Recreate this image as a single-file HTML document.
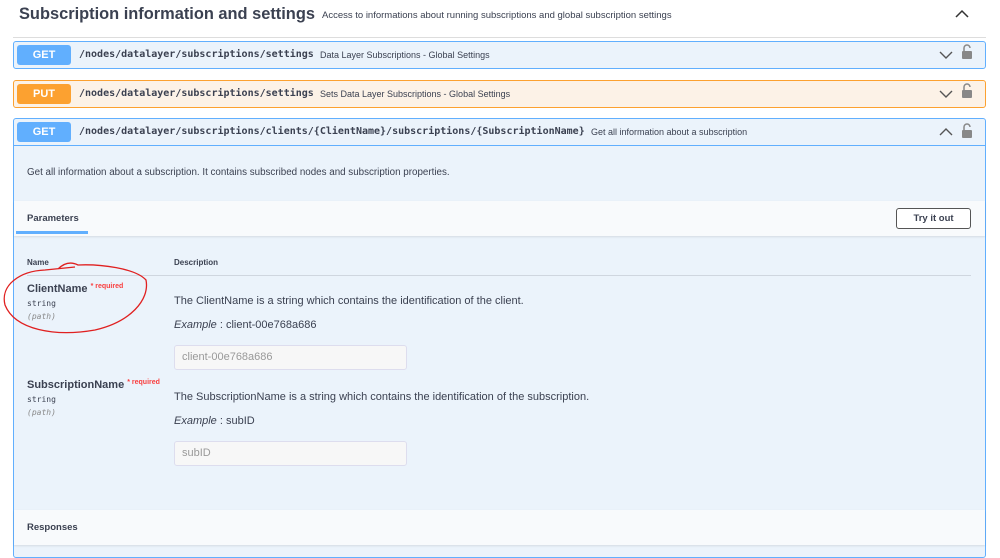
<!DOCTYPE html><html><head><style>
*{margin:0;padding:0;box-sizing:border-box}
body{width:1000px;height:549px;overflow:hidden;background:#fff;font-family:"Liberation Sans",sans-serif;color:#3b4151;position:relative}
.a{position:absolute;white-space:nowrap}
.mono{font-family:"DejaVu Sans Mono","Liberation Mono",monospace}
.badge{position:absolute;left:3px;top:3px;width:54px;height:20px;border-radius:3px;color:#fff;font-weight:bold;font-size:11px;text-align:center;line-height:20px}
.path{font-weight:bold;font-size:10px}
.sm{font-size:9px;color:#3b4151}
</style></head><body>
<div class="a" style="left:19px;top:5px;font-size:16.4px;font-weight:bold">Subscription information and settings</div>
<div class="a" style="left:322px;top:10px;font-size:9.5px">Access to informations about running subscriptions and global subscription settings</div>
<svg class="a" style="left:955px;top:9px" width="14" height="10"><path d="M1 8L7 2L13 8" stroke="#333" stroke-width="1.5" fill="none"/></svg>
<div class="a" style="left:13px;top:37px;width:973px;height:1px;background:#ddd"></div>

<div class="a" style="left:13px;top:41px;width:973px;height:28px;background:#ebf3fb;border:1px solid #61affe;border-radius:3px">
<div class="badge" style="background:#61affe">GET</div>
<div class="a mono path" style="left:65px;top:7px">/nodes/datalayer/subscriptions/settings</div>
<div class="a sm" style="left:306px;top:8px">Data Layer Subscriptions - Global Settings</div>
</div>
<div class="a" style="left:13px;top:80px;width:973px;height:28px;background:#fcf2e7;border:1px solid #fca130;border-radius:3px">
<div class="badge" style="background:#fca130">PUT</div>
<div class="a mono path" style="left:65px;top:7px">/nodes/datalayer/subscriptions/settings</div>
<div class="a sm" style="left:306px;top:8px">Sets Data Layer Subscriptions - Global Settings</div>
</div>
<div class="a" style="left:13px;top:118px;width:973px;height:440px;background:#ebf3fb;border:1px solid #61affe;border-radius:3px">
<div class="badge" style="background:#61affe">GET</div>
<div class="a mono path" style="left:65px;top:7px">/nodes/datalayer/subscriptions/clients/{ClientName}/subscriptions/{SubscriptionName}</div>
<div class="a sm" style="left:577px;top:8px">Get all information about a subscription</div>
<div class="a" style="left:0;top:26px;width:971px;height:1px;background:#61affe"></div>
<div class="a" style="left:13px;top:48px;font-size:9.8px">Get all information about a subscription. It contains subscribed nodes and subscription properties.</div>
<div class="a" style="left:0;top:82px;width:971px;height:35px;background:#f8fafc;box-shadow:0 1px 2px rgba(0,0,0,.1)"></div>
<div class="a" style="left:13px;top:94px;font-size:9.5px;font-weight:bold">Parameters</div>
<div class="a" style="left:2px;top:112px;width:72px;height:3px;background:#61affe"></div>
<div class="a" style="left:882px;top:89px;width:75px;height:21px;border:1px solid #555;border-radius:3px;background:#fff;font-size:9.5px;font-weight:bold;text-align:center;line-height:19px">Try it out</div>
<div class="a" style="left:13px;top:139px;font-size:8px;font-weight:bold">Name</div>
<div class="a" style="left:160px;top:139px;font-size:8px;font-weight:bold">Description</div>
<div class="a" style="left:13px;top:156px;width:944px;height:1px;background:#cfd6df"></div>
<div class="a" style="left:13px;top:164px;font-size:11px;font-weight:bold">ClientName <span style="color:#f93e3e;font-size:7px;vertical-align:top">* required</span></div>
<div class="a mono" style="left:13px;top:180px;font-size:8px">string</div>
<div class="a mono" style="left:13px;top:193px;font-size:8px;color:#888;font-style:italic">(path)</div>
<div class="a" style="left:160px;top:176px;font-size:11px">The ClientName is a string which contains the identification of the client.</div>
<div class="a" style="left:160px;top:200px;font-size:11px"><i>Example</i> : client-00e768a686</div>
<div class="a" style="left:160px;top:226px;width:233px;height:25px;background:#f7f7f7;border:1px solid #dde;border-radius:3px;font-size:11px;color:#999;padding:5px 7px">client-00e768a686</div>
<div class="a" style="left:13px;top:260px;font-size:11px;font-weight:bold">SubscriptionName <span style="color:#f93e3e;font-size:7px;vertical-align:top">* required</span></div>
<div class="a mono" style="left:13px;top:276px;font-size:8px">string</div>
<div class="a mono" style="left:13px;top:289px;font-size:8px;color:#888;font-style:italic">(path)</div>
<div class="a" style="left:160px;top:272px;font-size:11px">The SubscriptionName is a string which contains the identification of the subscription.</div>
<div class="a" style="left:160px;top:296px;font-size:11px"><i>Example</i> : subID</div>
<div class="a" style="left:160px;top:322px;width:233px;height:25px;background:#f7f7f7;border:1px solid #dde;border-radius:3px;font-size:11px;color:#999;padding:5px 7px">subID</div>
<div class="a" style="left:0;top:391px;width:971px;height:35px;background:#f8fafc;box-shadow:0 1px 2px rgba(0,0,0,.1)"></div>
<div class="a" style="left:13px;top:403px;font-size:9.5px;font-weight:bold">Responses</div>
</div>
<svg class="a" style="left:0;top:0" width="1000" height="549">
<g stroke="#555" stroke-width="1.4" fill="none"><path d="M940 52L946 58L952 52"/><path d="M940 91L946 97L952 91"/><path d="M940 135L946 129L952 135"/></g>
<g fill="#888"><rect x="962" y="51" width="10" height="8" rx="1"/><rect x="962" y="90" width="10" height="8" rx="1"/><rect x="962" y="130" width="10" height="8" rx="1"/></g>
<g stroke="#888" stroke-width="1.5" fill="none"><path d="M964 51V48a3 3 0 0 1 6 0"/><path d="M964 90V87a3 3 0 0 1 6 0"/><path d="M964 130V127a3 3 0 0 1 6 0"/></g>
<path d="M58 269C65 262 72 262 78 265C100 264 135 268 146 280C150 300 130 322 95 330C55 337 15 330 5 305C0 285 20 271 45 270L75 267" stroke="#e02020" stroke-width="1.3" fill="none"/>
</svg>
</body></html>
